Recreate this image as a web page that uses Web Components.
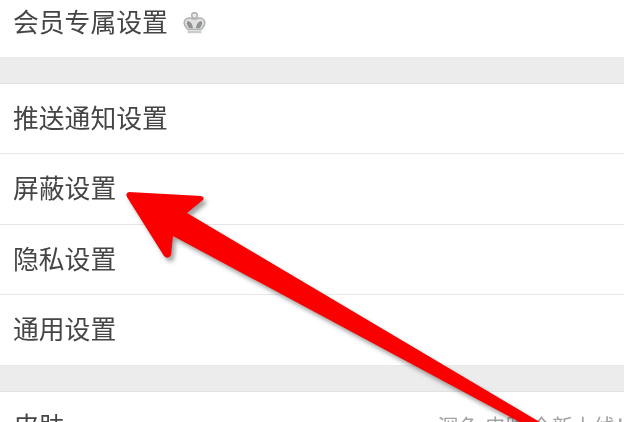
<!DOCTYPE html>
<html lang="zh">
<head>
<meta charset="utf-8">
<style>
  html, body { margin: 0; height: 422px; overflow: hidden; background: #fff; }
  body { font-family: "Noto Sans CJK SC", "Liberation Sans", sans-serif; }
</style>
</head>
<body>
<settings-page>
  <setting-row class="first">会员专属设置<crown-icon slot="badge"></crown-icon></setting-row>
  <setting-gap></setting-gap>
  <setting-row>推送通知设置</setting-row>
  <setting-row class="tall">屏蔽设置</setting-row>
  <setting-row>隐私设置</setting-row>
  <setting-row last>通用设置</setting-row>
  <setting-gap></setting-gap>
  <setting-row last>皮肤<span slot="value">深色 皮肤 全新上线！</span></setting-row>
  <red-arrow slot="overlay"></red-arrow>
</settings-page>

<script>
class SettingsPage extends HTMLElement {
    constructor() {
        super();
        this.shadowDOM = this.attachShadow({ mode: "open" });
        this.shadowDOM.innerHTML = `
        <style>
        :host { display: block; position: relative; width: 624px; height: 422px; overflow: hidden; background: #fff; }
        .list { display: flex; flex-direction: column; filter: blur(.3px); }
        </style>
        <div class="list"><slot></slot></div>
        <slot name="overlay"></slot>
        `;
    }
}

class SettingRow extends HTMLElement {
    constructor() {
        super();
        this.shadowDOM = this.attachShadow({ mode: "open" });
        this.shadowDOM.innerHTML = `
        <style>
        :host {
            display: flex;
            flex: none;
            box-sizing: border-box;
            height: 70px;
            padding-left: 13px;
            padding-bottom: 4px;
            align-items: center;
            gap: 15px;
            color: #454545;
            font-size: 25.8px;
            line-height: 30px;
            border-bottom: 1px solid #e6e6e6;
            white-space: nowrap;
        }
        :host(.first) { height: 57px; padding-bottom: 15px; border-bottom: 0; }
        :host(.tall) { height: 71px; }
        :host([last]) { border-bottom: 0; }
        .value { flex: none; margin-left: auto; margin-right: -12px; font-size: 21px; color: #a2a2a2; }
        </style>
        <slot></slot>
        <slot name="badge"></slot>
        <div class="value"><slot name="value"></slot></div>
        `;
    }
}

class SettingGap extends HTMLElement {
    constructor() {
        super();
        this.shadowDOM = this.attachShadow({ mode: "open" });
        this.shadowDOM.innerHTML = `
        <style>
        :host {
            display: block;
            flex: none;
            box-sizing: border-box;
            height: 27px;
            background: #ececec;
            border-top: 1px solid #e8e8e8;
            border-bottom: 1px solid #e2e2e2;
        }
        </style>
        `;
    }
}

class CrownIcon extends HTMLElement {
    constructor() {
        super();
        this.shadowDOM = this.attachShadow({ mode: "open" });
        this.shadowDOM.innerHTML = `
        <style>
        :host { display: block; width: 23px; height: 22px; margin-top: 4px; }
        svg { display: block; }
        </style>
        <svg width="23" height="22" viewBox="0 0 23 22">
          <circle cx="11.500" cy="3.500" r="2.800" fill="#e8e8e8" stroke="#b2b2b2" stroke-width="1.500"/>
          <path d="M5 17.500C2.500 15 1 12.500 1.200 10 1.500 7 4.800 5.200 8 6.200c1.300.4 2.200.8 3.500.8s2.200-.4 3.500-.8C18.200 5.200 21.500 7 21.800 10c.2 2.500-1.300 5-3.800 7.500z" fill="#e0e0e0" stroke="#b2b2b2" stroke-width="1.500"/>
          <path d="M4.200 9.200c3-.3 5.200 2.300 5.900 7H6.500C4.500 14.200 3.200 11.500 4.200 9.200zM18.800 9.200c-3-.3-5.200 2.300-5.900 7h3.600c2-2 3.300-4.700 2.300-7z" fill="#8d9494"/>
          <rect x="4.500" y="18.700" width="14" height="2.500" fill="#cbcbcb"/>
        </svg>
        `;
    }
}

class RedArrow extends HTMLElement {
    constructor() {
        super();
        this.shadowDOM = this.attachShadow({ mode: "open" });
        this.shadowDOM.innerHTML = `
        <style>
        :host { position: absolute; left: 0; top: 0; width: 624px; height: 422px; pointer-events: none; }
        svg { display: block; overflow: visible; filter: drop-shadow(3px 4px 2px rgba(70, 70, 70, .5)); }
        </style>
        <svg width="624" height="422" viewBox="0 0 624 422">
          <path d="M129 192 L201 196 Q205 197 203 200 L187 213 L560 434 L542 434 L173 236 L171 255 Q168 260 164 256 L127 197 Q125 193 129 192 Z" fill="#fb0000"/>
        </svg>
        `;
    }
}

customElements.define("settings-page", SettingsPage);
customElements.define("setting-row", SettingRow);
customElements.define("setting-gap", SettingGap);
customElements.define("crown-icon", CrownIcon);
customElements.define("red-arrow", RedArrow);
</script>
</body>
</html>
